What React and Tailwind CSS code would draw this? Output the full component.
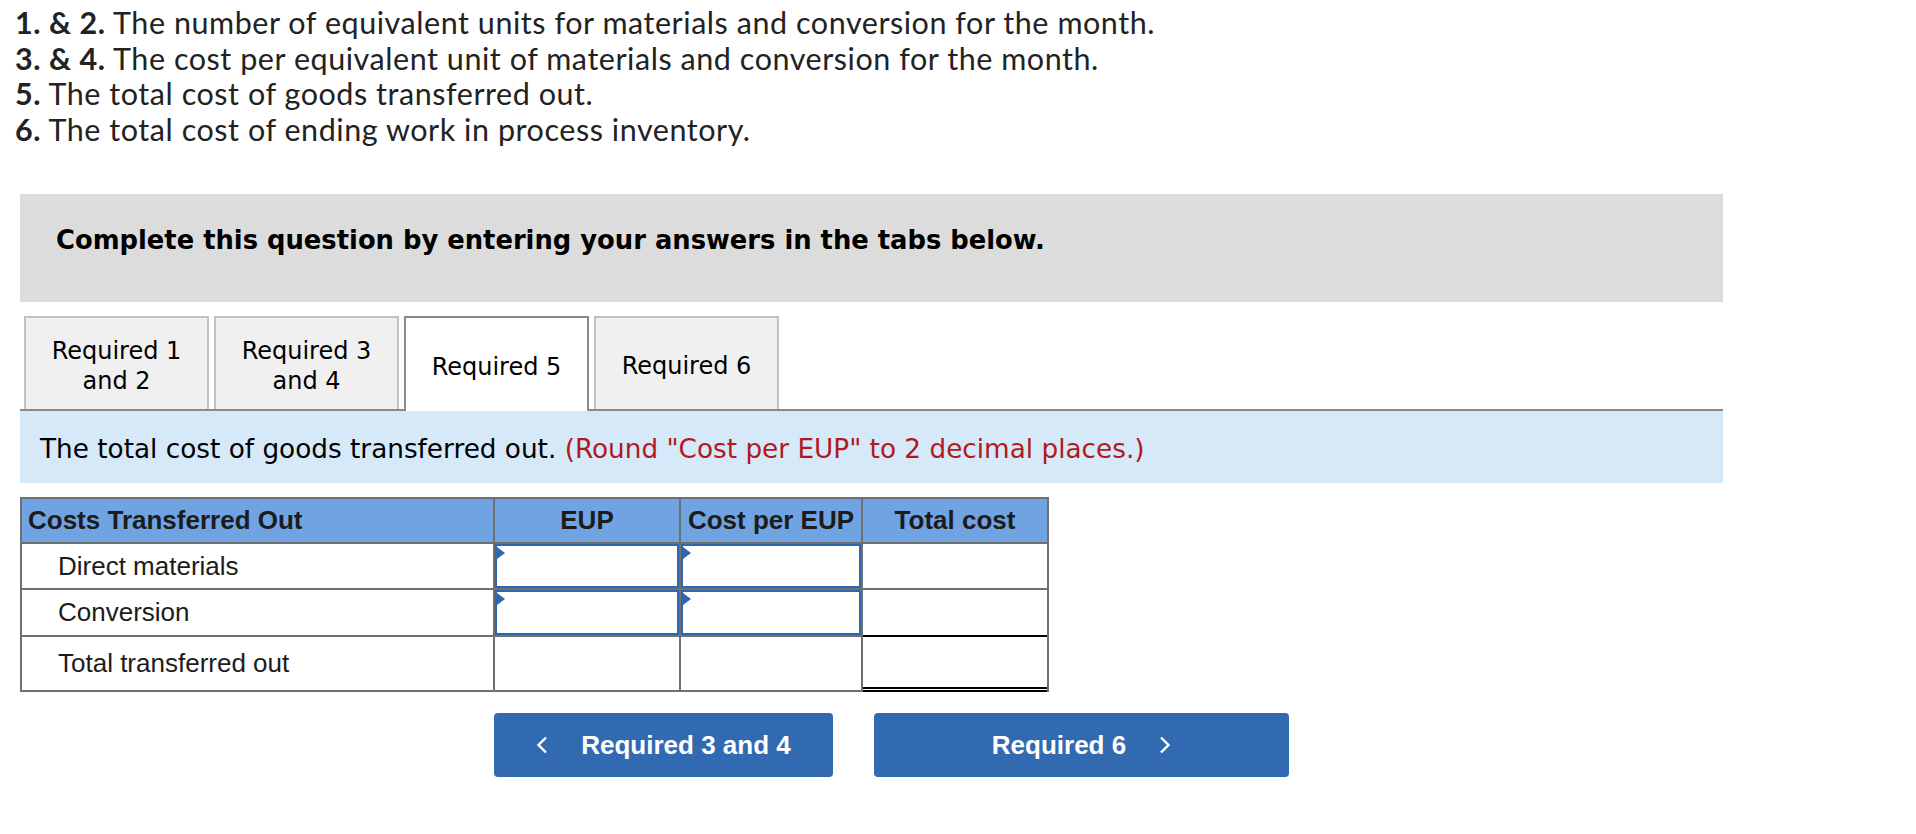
import React from "react";

const verdana = { fontFamily: '"DejaVu Sans", Verdana, sans-serif' };

const tabs = [
  { id: "r12", label: ["Required 1", "and 2"] },
  { id: "r34", label: ["Required 3", "and 4"] },
  { id: "r5", label: ["Required 5"] },
  { id: "r6", label: ["Required 6"] },
];

const rows = [
  { label: "Direct materials", input: true },
  { label: "Conversion", input: true },
  { label: "Total transferred out", input: false },
];

function InputCell() {
  return (
    <div className="relative h-full w-full border-2 border-[#2f66b0] bg-white">
      <div className="absolute left-0 top-[1px] h-0 w-0 border-y-[6px] border-l-[8px] border-y-transparent border-l-[#2f66b0]" />
    </div>
  );
}

function Chevron({ dir }) {
  return (
    <svg width="13" height="18" viewBox="0 0 13 18" fill="none">
      {dir === "left" ? (
        <polyline points="10,1.5 2.5,9 10,16.5" stroke="white" strokeWidth="2.4" />
      ) : (
        <polyline points="3,1.5 10.5,9 3,16.5" stroke="white" strokeWidth="2.4" />
      )}
    </svg>
  );
}

export default function App() {
  const active = "r5";

  return (
    <div className="min-h-screen bg-white text-[#222]">
      {/* question parts */}
      <div
        className="pl-[15px] pt-[5px] text-[30.5px] leading-[35.5px] tracking-[0.55px] text-[#222]"
        style={{ fontFamily: "Lato, sans-serif" }}
      >
        <p><b>1. &amp; 2.</b> The number of equivalent units for materials and conversion for the month.</p>
        <p><b>3. &amp; 4.</b> The cost per equivalent unit of materials and conversion for the month.</p>
        <p><b>5.</b> The total cost of goods transferred out.</p>
        <p><b>6.</b> The total cost of ending work in process inventory.</p>
      </div>

      <div className="ml-[20px] mt-[47px] w-[1703px]">
        <div className="h-[108px] bg-[#dcdcdc] pl-[36px] pt-[27px]" style={verdana}>
          <p className="text-[25.8px] font-bold text-black">
            Complete this question by entering your answers in the tabs below.
          </p>
        </div>

        {/* tabs */}
        <div className="mt-[14px] flex items-end gap-[5px] border-b-2 border-[#8a8a8a] pl-[4px]" style={verdana}>
          {tabs.map((t) => (
            <div
              key={t.id}
              className={`flex w-[185px] flex-col items-center justify-center border-2 border-b-0 pt-[5px] text-center text-[24px] leading-[30px] text-black ${
                t.id === active
                  ? "relative z-10 -mb-[2px] h-[95px] border-[#8a8a8a] bg-white"
                  : "h-[93px] border-[#c2c2c2] bg-[#f0f0f0]"
              }`}
            >
              {t.label.map((l) => (
                <span key={l}>{l}</span>
              ))}
            </div>
          ))}
        </div>

        <div className="flex h-[72px] items-center bg-[#d5e9f9] pl-[20px] pt-[6px] text-[26.3px]" style={verdana}>
          <p className="text-black">
            The total cost of goods transferred out.{" "}
            <span className="text-[#b3191b]">(Round "Cost per EUP" to 2 decimal places.)</span>
          </p>
        </div>

        {/* table */}
        <div
          className="mt-[14px] grid w-[1029px] grid-cols-[473px_186px_182px_184px] grid-rows-[45px_46px_47px_53px] border-2 border-[#707070] text-[26px] text-[#1c1c1c]"
          style={{ fontFamily: '"Liberation Sans", Arial, sans-serif' }}
        >
          <div className="flex items-center border-b-2 border-r-2 border-[#707070] bg-[#6fa3e2] pl-[6px] font-bold">
            Costs Transferred Out
          </div>
          <div className="flex items-center justify-center border-b-2 border-r-2 border-[#707070] bg-[#6fa3e2] font-bold">
            EUP
          </div>
          <div className="flex items-center justify-center border-b-2 border-r-2 border-[#707070] bg-[#6fa3e2] font-bold">
            Cost per EUP
          </div>
          <div className="flex items-center justify-center border-b-2 border-[#707070] bg-[#6fa3e2] font-bold">
            Total cost
          </div>

          {rows.map((r, i) => {
            const last = i === rows.length - 1;
            return (
              <React.Fragment key={r.label}>
                <div className={`flex items-center border-r-2 border-[#707070] pl-[36px] ${last ? "" : "border-b-2"}`}>
                  {r.label}
                </div>
                <div className={`border-r-2 border-[#707070] ${last ? "" : "border-b-2"}`}>
                  {r.input && <InputCell />}
                </div>
                <div className={`border-r-2 border-[#707070] ${last ? "" : "border-b-2"}`}>
                  {r.input && <InputCell />}
                </div>
                <div
                  className={
                    i === 0
                      ? "border-b-2 border-[#707070]"
                      : i === 1
                      ? "border-b-2 border-black"
                      : "-mb-[2px] border-b-[5px] border-double border-black"
                  }
                />
              </React.Fragment>
            );
          })}
        </div>

        {/* nav buttons */}
        <div
          className="ml-[474px] mt-[21px] flex gap-[41px] text-[26px] font-bold text-white"
          style={{ fontFamily: '"Liberation Sans", Arial, sans-serif' }}
        >
          <button className="flex h-[64px] w-[339px] items-center justify-center gap-[32px] rounded-[4px] bg-[#326ab2]">
            <Chevron dir="left" />
            <span>Required 3 and 4</span>
          </button>
          <button className="flex h-[64px] w-[415px] items-center justify-center gap-[32px] rounded-[4px] bg-[#326ab2]">
            <span>Required 6</span>
            <Chevron dir="right" />
          </button>
        </div>
      </div>
    </div>
  );
}
